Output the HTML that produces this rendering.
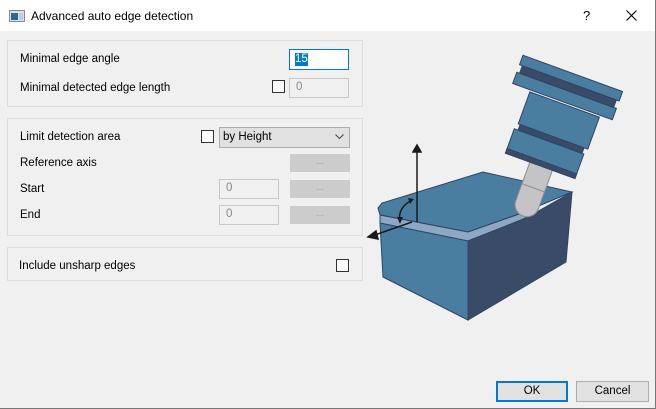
<!DOCTYPE html>
<html><head><style>
body{margin:0;width:656px;height:409px;overflow:hidden;background:#f0f0f0;font-family:"Liberation Sans",sans-serif;font-size:11.5px;color:#000;position:relative}
.a{position:absolute}
.title{left:0;top:0;width:656px;height:31px;background:#fff}
.grp{border:1px solid #dcdcdc;box-sizing:border-box}
.lbl{left:20px;line-height:14px}
.cb{width:13px;height:13px;border:1px solid #333;box-sizing:border-box;background:#fff}
.ed{border:1px solid #c8c8c8;background:#f0f0f0;box-sizing:border-box;color:#888;padding-left:6px;line-height:17px}
.db{background:#cccccc;border:1px solid #cccccc;box-sizing:border-box;color:#999;text-align:center;line-height:14px;font-size:10px}
.btn{background:#e1e1e1;box-sizing:border-box;text-align:center;line-height:17px}
</style></head><body>
<div class="a title"></div>
<svg class="a" style="left:9px;top:10px" width="16" height="12"><rect x="0.5" y="0.5" width="15" height="11" fill="#dde" stroke="#888"/><rect x="2" y="3" width="7" height="7" fill="#2d6a7a"/><rect x="10" y="3" width="4" height="7" fill="#bcd"/></svg>
<div class="a" style="left:31px;top:9px;font-size:12px">Advanced auto edge detection</div>
<div class="a" style="left:583px;top:8px;font-size:13px">?</div>
<svg class="a" style="left:626px;top:10px" width="11" height="11"><path d="M0.5 0.5L10.5 10.5M10.5 0.5L0.5 10.5" stroke="#000" stroke-width="1.1"/></svg>
<div class="a" style="right:0;top:0;width:1px;height:409px;background:#777"></div>
<div class="a" style="left:0;bottom:0;width:656px;height:1px;background:#777"></div>

<div class="a grp" style="left:7px;top:40px;width:356px;height:67px"></div>
<div class="a grp" style="left:7px;top:118px;width:356px;height:118px"></div>
<div class="a grp" style="left:7px;top:247px;width:356px;height:34px"></div>

<div class="a lbl" style="top:52px">Minimal edge angle</div>
<div class="a" style="left:289px;top:49px;width:60px;height:21px;border:1px solid #0078d7;box-sizing:border-box;background:#fff"><span style="position:absolute;left:5px;top:3px;background:#0078d7;color:#fff;line-height:13px">15</span></div>
<div class="a lbl" style="top:81px">Minimal detected edge length</div>
<div class="a cb" style="left:272px;top:80px"></div>
<div class="a ed" style="left:289px;top:78px;width:60px;height:20px">0</div>

<div class="a lbl" style="top:130px">Limit detection area</div>
<div class="a cb" style="left:201px;top:130px"></div>
<div class="a" style="left:219px;top:127px;width:131px;height:21px;background:#e1e1e1;border:1px solid #adadad;box-sizing:border-box;line-height:19px;padding-left:3px">by Height</div>
<svg class="a" style="left:335px;top:134px" width="9" height="6"><path d="M0.5 0.5L4.5 4.5L8.5 0.5" stroke="#444" fill="none"/></svg>
<div class="a lbl" style="top:156px">Reference axis</div>
<div class="a db" style="left:290px;top:154px;width:60px;height:18px">...</div>
<div class="a lbl" style="top:182px">Start</div>
<div class="a ed" style="left:219px;top:179px;width:60px;height:20px">0</div>
<div class="a db" style="left:290px;top:180px;width:60px;height:18px">...</div>
<div class="a lbl" style="top:208px">End</div>
<div class="a ed" style="left:219px;top:205px;width:60px;height:20px">0</div>
<div class="a db" style="left:290px;top:206px;width:60px;height:18px">...</div>

<div class="a lbl" style="left:19px;top:259px">Include unsharp edges</div>
<div class="a cb" style="left:336px;top:259px"></div>

<svg class="a" style="left:0;top:0" width="656" height="409">
<g stroke="#2e4466" stroke-width="1">
<polygon points="378,208 382,203 483,172 572,192 522,213 468,232 380,215" fill="#4a7ea0"/>
<polygon points="380,215 468,232 522,213 526,218 468,241 380,223" fill="#8ea8c4"/>
<polygon points="380,223 468,241 468,320 383,277" fill="#4a7ea0"/>
<polygon points="468,241 526,218 572,192 566,262 468,320" fill="#3a4b68"/>
</g>
<g transform="translate(523,216) rotate(20)" stroke="#2e4466" stroke-width="1">
<path d="M-12 -56 L12 -56 L12 -12 A12 12 0 0 1 -12 -12 Z" fill="#c4c3c6" stroke="#8c8c8c"/>
<path d="M-12 -30 L12 -30" stroke="#8c8c8c"/>
<rect x="-38" y="-79" width="74" height="26" fill="#4a7ea0"/>
<rect x="-38" y="-58" width="74" height="5" fill="#3a4b68"/>
<rect x="-34" y="-85" width="68" height="6" fill="#3a4b68"/>
<rect x="-36" y="-119" width="74" height="34" fill="#4a7ea0"/>
<rect x="-55" y="-133" width="106" height="12" fill="#4a7ea0"/>
<rect x="-52" y="-141" width="100" height="8" fill="#3a4b68"/>
<rect x="-55" y="-151" width="106" height="10" fill="#4a7ea0"/>
</g>
<g stroke="#1a1a1a" stroke-width="1.5" fill="none">
<path d="M417 222 V150"/><path d="M413 152 L417 145 L421 152 Z" fill="#1a1a1a"/>
<path d="M412 222 L372 236"/><path d="M376 231 L368 237 L378 239 Z" fill="#1a1a1a"/>
<path d="M400 222 Q397 208 412 200"/><path d="M397 217 L400 224 L403 217 Z" fill="#1a1a1a" stroke="none"/><path d="M408 198 L414 199 L410 204 Z" fill="#1a1a1a" stroke="none"/>
</g>
</svg>

<div class="a btn" style="left:496px;top:381px;width:72px;height:21px;border:2px solid #0078d7;line-height:17px">OK</div>
<div class="a btn" style="left:576px;top:381px;width:73px;height:21px;border:1px solid #adadad;line-height:19px">Cancel</div>
</body></html>
